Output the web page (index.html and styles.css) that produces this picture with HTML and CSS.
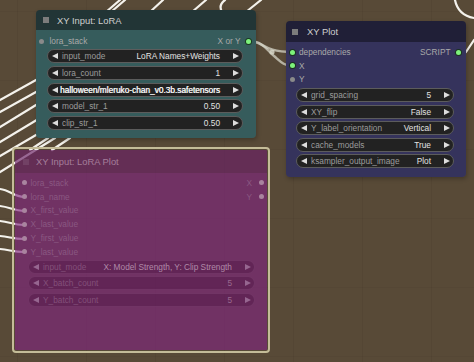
FILE: index.html
```html
<!DOCTYPE html>
<html>
<head>
<meta charset="utf-8">
<link rel="stylesheet" href="styles.css">
</head>
<body>
<div class="canvas">
  <svg class="wires" width="474" height="362" viewBox="0 0 474 362">
    <g class="w-white">
      <path d="M120 0 L106 12"/>
      <path d="M125 0 L111 12"/>
      <path d="M163 0 L150 12"/>
      <path d="M206 0 L192 12"/>
      <path d="M225 0 Q218 5 222 12"/>
      <path d="M261 0 L246 12"/>
      <path d="M455 0 Q458 15 474 18"/>
      <path d="M466 52 Q470 46 474 40"/>
      <path d="M0 100 L36 80"/>
      <path d="M0 112 L36 92"/>
      <path d="M0 127 L36 105"/>
      <path d="M0 142 L40 118"/>
      <path d="M0 156 L48 128"/>
      <path d="M0 172 L55 138"/>
      <path d="M30 150 L48 138"/>
      <path d="M52 150 L70 138"/>
      <path d="M0 189 C10 190 14 197 24 197"/>
      <path d="M0 206 C10 207 14 211 24 211"/>
      <path d="M0 221 C10 222 14 225 24 225"/>
      <path d="M0 236 C10 237 14 239 24 239"/>
      <path d="M0 249 C10 250 14 252 24 252"/>
    </g>
    <g class="w-soft">
      <path d="M249 41 C264 41 262 52 292 52"/>
      <path d="M249 41 C264 41 268 52 274 56 C280 61 284 66 292 66"/>
      <circle cx="272" cy="52" r="2.6"/>
    </g>
  </svg>

  <div class="node node-lora">
    <div class="node-title"><span class="title-box"></span><span class="title-text">XY Input: LoRA</span></div>
    <div class="node-body">
      <div class="slots">
        <div class="slot-row">
          <div class="slot in"><span class="dot gray"></span>lora_stack</div>
          <div class="slot out">X or Y<span class="dot green"></span></div>
        </div>
      </div>
      <div class="widgets">
        <div class="widget"><span class="arr l"></span><span class="w-label">input_mode</span><span class="w-value">LoRA Names+Weights</span><span class="arr r"></span></div>
        <div class="widget"><span class="arr l"></span><span class="w-label">lora_count</span><span class="w-value">1</span><span class="arr r"></span></div>
        <div class="widget"><span class="arr l"></span><span class="w-value long">halloween/mleruko-chan_v0.3b.safetensors</span><span class="arr r"></span></div>
        <div class="widget"><span class="arr l"></span><span class="w-label">model_str_1</span><span class="w-value">0.50</span><span class="arr r"></span></div>
        <div class="widget"><span class="arr l"></span><span class="w-label">clip_str_1</span><span class="w-value">0.50</span><span class="arr r"></span></div>
      </div>
    </div>
  </div>

  <div class="node node-plot">
    <div class="node-title"><span class="title-box"></span><span class="title-text">XY Plot</span></div>
    <div class="node-body">
      <div class="slots">
        <div class="slot-row">
          <div class="slot in"><span class="dot green"></span>dependencies</div>
          <div class="slot out">SCRIPT<span class="dot green"></span></div>
        </div>
        <div class="slot-row"><div class="slot in"><span class="dot green"></span>X</div></div>
        <div class="slot-row"><div class="slot in"><span class="dot gray"></span>Y</div></div>
      </div>
      <div class="widgets">
        <div class="widget"><span class="arr l"></span><span class="w-label">grid_spacing</span><span class="w-value">5</span><span class="arr r"></span></div>
        <div class="widget"><span class="arr l"></span><span class="w-label">XY_flip</span><span class="w-value">False</span><span class="arr r"></span></div>
        <div class="widget"><span class="arr l"></span><span class="w-label">Y_label_orientation</span><span class="w-value">Vertical</span><span class="arr r"></span></div>
        <div class="widget"><span class="arr l"></span><span class="w-label">cache_models</span><span class="w-value">True</span><span class="arr r"></span></div>
        <div class="widget"><span class="arr l"></span><span class="w-label">ksampler_output_image</span><span class="w-value">Plot</span><span class="arr r"></span></div>
      </div>
    </div>
  </div>

  <div class="node node-loraplot">
    <div class="node-title"><span class="title-box"></span><span class="title-text">XY Input: LoRA Plot</span></div>
    <div class="node-body">
      <div class="slots">
        <div class="slot-row">
          <div class="slot in"><span class="dot faint"></span>lora_stack</div>
          <div class="slot out">X<span class="dot faint"></span></div>
        </div>
        <div class="slot-row">
          <div class="slot in"><span class="dot faint"></span>lora_name</div>
          <div class="slot out">Y<span class="dot faint"></span></div>
        </div>
        <div class="slot-row"><div class="slot in"><span class="dot faint"></span>X_first_value</div></div>
        <div class="slot-row"><div class="slot in"><span class="dot faint"></span>X_last_value</div></div>
        <div class="slot-row"><div class="slot in"><span class="dot faint"></span>Y_first_value</div></div>
        <div class="slot-row"><div class="slot in"><span class="dot faint"></span>Y_last_value</div></div>
      </div>
      <div class="widgets">
        <div class="widget"><span class="arr l"></span><span class="w-label">input_mode</span><span class="w-value bright">X: Model Strength, Y: Clip Strength</span><span class="arr r"></span></div>
        <div class="widget"><span class="arr l"></span><span class="w-label">X_batch_count</span><span class="w-value">5</span><span class="arr r"></span></div>
        <div class="widget"><span class="arr l"></span><span class="w-label">Y_batch_count</span><span class="w-value">5</span><span class="arr r"></span></div>
      </div>
    </div>
  </div>
</div>
</body>
</html>
```

FILE: styles.css
```css
html, body {
  margin: 0;
  padding: 0;
}
body {
  background: #584a37;
  font-family: "Liberation Sans", Arial, sans-serif;
  width: 474px;
  height: 362px;
  overflow: hidden;
}
.canvas {
  position: relative;
  width: 474px;
  height: 362px;
  background-color: #584a37;
  background-image:
    linear-gradient(90deg, rgba(0,0,0,0.05) 1px, transparent 1px),
    linear-gradient(0deg, rgba(0,0,0,0.04) 1px, transparent 1px);
  background-size: 69px 69px;
  background-position: 17px 12px;
}
.wires {
  position: absolute;
  left: 0;
  top: 0;
}
.w-white path {
  fill: none;
  stroke: #f4f2ec;
  stroke-width: 2.2;
  stroke-linecap: round;
}
.w-soft path {
  fill: none;
  stroke: rgba(214, 214, 200, 0.75);
  stroke-width: 2.4;
  stroke-linecap: round;
}
.w-soft circle {
  fill: rgba(214, 214, 200, 0.85);
}

.node {
  position: absolute;
  display: flex;
  flex-direction: column;
  border-radius: 4px;
  box-shadow: 1px 2px 4px rgba(0, 0, 0, 0.25);
}
.node-title {
  display: flex;
  align-items: center;
  border-radius: 4px 4px 0 0;
  color: #cfcfcf;
  font-size: 9.4px;
  flex-shrink: 0;
}
.title-box {
  width: 6px;
  height: 6px;
  background: #7c7c7c;
}
.node-body {
  flex: 1;
  display: flex;
  flex-direction: column;
  border-radius: 0 0 4px 4px;
}
.slots {
  display: flex;
  flex-direction: column;
}
.slot-row {
  display: flex;
  align-items: center;
  justify-content: space-between;
  font-size: 8.3px;
  color: #a9a9a9;
}
.slot {
  display: flex;
  align-items: center;
  white-space: nowrap;
}
.slot.in { gap: 5.5px; padding-left: 3px; }
.slot.out { gap: 5px; padding-right: 5.5px; margin-left: auto; }
.dot {
  width: 5px;
  height: 5px;
  border-radius: 50%;
  flex-shrink: 0;
}
.dot.gray { background: #8a8a8a; }
.dot.green {
  background: #7df27b;
  box-shadow: 0 0 0 1px rgba(20, 50, 20, 0.8);
}
.widgets {
  display: flex;
  flex-direction: column;
}
.widget {
  height: 14px;
  box-sizing: border-box;
  border: 1px solid #5c5c5c;
  border-radius: 7px;
  background: #222222;
  display: flex;
  align-items: center;
  padding: 0 3px 0 4px;
  font-size: 8.3px;
  white-space: nowrap;
  overflow: hidden;
}
.arr {
  width: 0;
  height: 0;
  flex-shrink: 0;
  border-top: 3.5px solid transparent;
  border-bottom: 3.5px solid transparent;
}
.arr.l { border-right: 6px solid #dddddd; }
.arr.r { border-left: 6px solid #dddddd; }
.w-label {
  color: #9c9c9c;
  margin-left: 4px;
}
.w-value {
  color: #e2e2e2;
  margin-left: auto;
  margin-right: 13px;
}
.w-value.long {
  color: #f0f0f0;
  text-shadow: 0.4px 0 0 #f0f0f0;
}

/* XY Input: LoRA */
.node-lora {
  left: 36px;
  top: 10px;
  width: 220px;
  height: 128px;
}
.node-lora .node-title {
  height: 20px;
  background: #223536;
  padding-left: 7px;
  gap: 8px;
}
.node-lora .node-body {
  background: #365c5c;
  padding-top: 4px;
}
.node-lora .slot-row { height: 14px; }
.node-lora .widgets {
  gap: 2.75px;
  margin: 1px 13px 0 11px;
}

/* XY Plot */
.node-plot {
  left: 286px;
  top: 21px;
  width: 180px;
  height: 156px;
}
.node-plot .node-title {
  height: 21px;
  background: #201f37;
  padding-left: 6px;
  gap: 9px;
}
.node-plot .node-body {
  background: #35335c;
  padding-top: 3.25px;
}
.node-plot .slot-row { height: 13.5px; }
.node-plot .slot.in { padding-left: 3.5px; gap: 4.5px; }
.node-plot .widgets {
  gap: 2.6px;
  margin: 2.3px 12px 0 10px;
}

/* XY Input: LoRA Plot (faded, selected) */
.node-loraplot {
  left: 15px;
  top: 150px;
  width: 252px;
  height: 200px;
  border-radius: 1px;
  outline: 2px solid #c4bc98;
  outline-offset: 1px;
  box-shadow: none;
}
.node-loraplot .node-title {
  height: 23px;
  background: rgba(106, 32, 102, 0.66);
  padding-left: 8px;
  gap: 7px;
  color: #a47e9b;
  border-radius: 1px 1px 0 0;
}
.node-loraplot .node-body { border-radius: 0 0 1px 1px; }
.node-loraplot .title-box { background: rgba(150, 110, 140, 0.3); }
.node-loraplot .node-body {
  background: rgba(128, 37, 127, 0.63);
  padding-top: 3px;
}
.node-loraplot .slot-row {
  height: 13.8px;
  color: #8a5882;
}
.node-loraplot .slot.in { padding-left: 6.5px; gap: 4px; }
.node-loraplot .slot.out { padding-right: 3px; gap: 7px; }
.dot.faint { background: #a9849f; }
.node-loraplot .widgets {
  gap: 2.5px;
  margin: 1.2px 12px 0 13px;
}
.node-loraplot .widget {
  background: rgba(80, 22, 68, 0.45);
  border-color: rgba(150, 90, 140, 0.3);
}
.node-loraplot .arr.l { border-right-color: #966690; }
.node-loraplot .arr.r { border-left-color: #966690; }
.node-loraplot .w-label { color: #82507a; }
.node-loraplot .w-value { color: #99698f; }
.node-loraplot .w-value.bright { color: #b08aa8; }
```
